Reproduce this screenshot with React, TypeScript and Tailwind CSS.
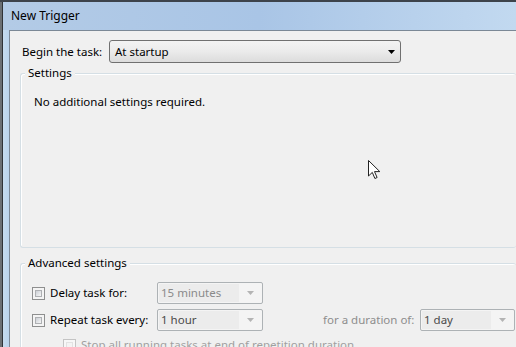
import React from "react";

const font = { fontFamily: '"Noto Sans", "Open Sans", Arial, sans-serif' };

function Checkbox({ disabled = false }: { disabled?: boolean }) {
  return (
    <span
      className={`w-[13px] h-[13px] shrink-0 border p-[2px] ${
        disabled ? "border-[#c4c4c4] bg-[#f7f7f7]" : "border-[#8e8f8f] bg-[#f4f4f4]"
      }`}
    >
      <span
        className={`block w-full h-full border ${
          disabled
            ? "border-[#e2e2e2] bg-[#f4f4f4]"
            : "border-[#aeb0b3] bg-gradient-to-br from-[#cbcfd5] to-[#f6f6f6]"
        }`}
      />
    </span>
  );
}

function Arrow({ color }: { color: string }) {
  return (
    <svg width="7" height="4" viewBox="0 0 7 4" className="shrink-0">
      <path d="M0 0h7L3.5 4z" fill={color} />
    </svg>
  );
}

function DisabledCombo({ value, dim, width }: { value: string; dim?: boolean; width: string }) {
  return (
    <div className={`${width} h-[22px] shrink-0 flex items-center border border-[#adb2b5] rounded-[2px] bg-[#f4f4f4] p-[1px]`}>
      <div
        className={`flex-1 h-full flex items-center pl-[2px] bg-[#ececec] ${
          dim ? "text-[#8a8a8a]" : "text-[#4a4a4a]"
        }`}
      >
        {value}
      </div>
      <div className="w-[22px] h-full flex items-center justify-center">
        <Arrow color="#b4b4b4" />
      </div>
    </div>
  );
}

export default function App() {
  return (
    <div className="w-[516px] h-[347px] overflow-hidden relative bg-[#f0f0f0] flex flex-col" style={font}>
      <div className="h-[2px] bg-[#3d434b] shrink-0" />
      <div className="flex flex-1 min-h-0">
        <div className="w-[2px] bg-[#6b6f73] shrink-0" />
        <div className="flex-1 flex flex-col border-l border-[#2f3338]">
          {/* title bar */}
          <div className="h-[28px] shrink-0 flex items-center pl-[8px] bg-gradient-to-r from-[#b3cbe6] via-[#a9c5e6] to-[#c2d9f0]">
            <span className="text-[12px] text-black">New Trigger</span>
          </div>
          <div className="flex flex-1 min-h-0">
            <div className="w-[6px] shrink-0 bg-gradient-to-r from-[#c6dcef] to-[#b9d3ec]" />
            <div className="flex-1 flex flex-col border-l border-t border-[#7b8896] bg-[#f0f0f0] text-[11.5px] text-black">
              {/* begin the task */}
              <div className="flex items-center mt-[9px] pl-[12px] h-[23px] shrink-0">
                <span className="w-[87px]">Begin the task:</span>
                <div className="w-[292px] h-[23px] flex items-center border border-[#707070] rounded-[3px] bg-gradient-to-b from-[#f3f3f3] via-[#ebebeb] to-[#dcdcdc] pl-[5px] pr-[5px]">
                  <span className="flex-1">At startup</span>
                  <Arrow color="#000" />
                </div>
              </div>

              {/* settings group */}
              <div className="relative shrink-0 ml-[10px] mt-[10px] h-[175px] border border-[#d5dfe5] rounded-[3px] border-r-0 shadow-[inset_1px_1px_0_#fff]">
                <span className="absolute left-[4px] top-[-9px] px-[3px] bg-[#f0f0f0] leading-[16px]">Settings</span>
                <div className="pl-[13px] pt-[19px]">No additional settings required.</div>
              </div>

              {/* advanced group */}
              <div className="relative ml-[10px] mt-[15px] flex-1 border border-[#d5dfe5] rounded-[3px] border-r-0 border-b-0 shadow-[inset_1px_1px_0_#fff]">
                <span className="absolute left-[4px] top-[-9px] px-[3px] bg-[#f0f0f0] leading-[16px]">Advanced settings</span>
                <div className="pl-[11px] pt-[18px] flex flex-col gap-[5px]">
                  <div className="flex items-center h-[22px]">
                    <Checkbox />
                    <span className="ml-[5px] w-[107px]">Delay task for:</span>
                    <DisabledCombo value="15 minutes" dim width="w-[106px]" />
                  </div>
                  <div className="flex items-center h-[22px]">
                    <Checkbox />
                    <span className="ml-[5px] w-[107px]">Repeat task every:</span>
                    <DisabledCombo value="1 hour" width="w-[106px]" />
                    <span className="ml-[60px] w-[97px] text-[#8d8d8d] whitespace-nowrap">for a duration of:</span>
                    <DisabledCombo value="1 day" width="w-[95px]" />
                  </div>
                  <div className="flex items-center h-[16px] mt-[1px] pl-[31px]">
                    <Checkbox disabled />
                    <span className="ml-[5px] text-[#a0a0a0] whitespace-nowrap">
                      Stop all running tasks at end of repetition duration
                    </span>
                  </div>
                </div>
              </div>
            </div>
          </div>
        </div>
      </div>

      {/* mouse pointer */}
      <svg className="absolute left-[368px] top-[160px]" width="12" height="20" viewBox="0 0 12 20">
        <path
          d="M0.5 0.5v15.5l3.8-3.6 2.6 6.1 2.2-1-2.6-5.9h5.3z"
          fill="#fff"
          stroke="#222"
          strokeWidth="1"
          strokeLinejoin="round"
        />
      </svg>
    </div>
  );
}
